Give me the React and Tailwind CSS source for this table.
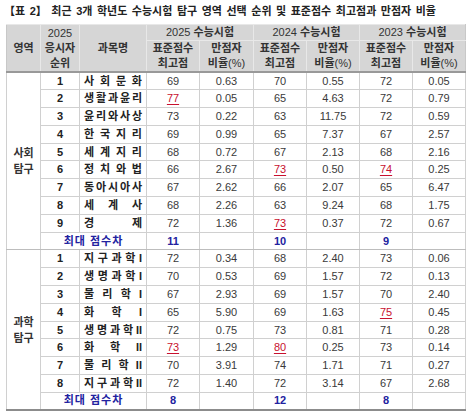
import React from "react";

const R = (v) => ({ v, red: true });

const social = [
  [1, "사 회 문 화", 69, "0.63", 70, "0.55", 72, "0.05"],
  [2, "생 활 과 윤 리", R(77), "0.05", 65, "4.63", 72, "0.79"],
  [3, "윤 리 와 사 상", 73, "0.22", 63, "11.75", 72, "0.59"],
  [4, "한 국 지 리", 69, "0.99", 65, "7.37", 67, "2.57"],
  [5, "세 계 지 리", 68, "0.72", 67, "2.13", 68, "2.16"],
  [6, "정 치 와 법", 66, "2.67", R(73), "0.50", R(74), "0.25"],
  [7, "동 아 시 아 사", 67, "2.62", 66, "2.07", 65, "6.47"],
  [8, "세 계 사", 68, "2.26", 63, "9.24", 68, "1.75"],
  [9, "경 제", 72, "1.36", R(73), "0.37", 72, "0.67"],
];

const science = [
  [1, "지 구 과 학 I", 72, "0.34", 68, "2.40", 73, "0.06"],
  [2, "생 명 과 학 I", 70, "0.53", 69, "1.57", 72, "0.13"],
  [3, "물 리 학 I", 67, "2.93", 69, "1.57", 70, "2.40"],
  [4, "화 학 I", 65, "5.90", 69, "1.63", R(75), "0.45"],
  [5, "생 명 과 학 II", 72, "0.75", 73, "0.81", 71, "0.28"],
  [6, "화 학 II", R(73), "1.29", R(80), "0.25", 73, "0.14"],
  [7, "물 리 학 II", 70, "3.91", 74, "1.71", 71, "0.27"],
  [8, "지 구 과 학 II", 72, "1.40", 72, "3.14", 67, "2.68"],
];

const td = "border border-[#d0d0d0] p-0 text-center align-middle";
const th = "border border-[#e8e8e8] bg-[#d6d6d6] p-0 text-center align-middle font-bold text-[#333]";

function Val({ x }) {
  if (x && typeof x === "object") {
    return (
      <span className="text-[#c8102e] underline decoration-[#c8102e] underline-offset-2">
        {x.v}
      </span>
    );
  }
  return <span>{x}</span>;
}

function Subject({ name }) {
  const parts = name.split(" ");
  return (
    <div className="flex justify-between px-[4px] font-bold text-[#222]">
      {parts.map((p, i) => (
        <span key={i}>{p}</span>
      ))}
    </div>
  );
}

function Group({ label, rows, max }) {
  return (
    <>
      {rows.map((r, i) => (
        <tr key={i} className="h-[17.8px]">
          {i === 0 && (
            <td rowSpan={rows.length + 1} className={`${td} font-bold text-[#333] leading-[16px] border-b-[#bdbdbd]`}>
              {label[0]}
              <br />
              {label[1]}
            </td>
          )}
          <td className={`${td} font-bold text-[#222]`}>{r[0]}</td>
          <td className={td}>
            <Subject name={r[1]} />
          </td>
          {r.slice(2).map((v, j) => (
            <td key={j} className={`${td} text-[#3a3a3a]`}>
              <Val x={v} />
            </td>
          ))}
        </tr>
      ))}
      <tr className="h-[17.8px]">
        <td colSpan={2} className={`${td} font-bold text-[#2222a0] tracking-[1px] border-b-[#bdbdbd]`}>
          최대 점수차
        </td>
        <td className={`${td} font-bold text-[#2222a0] border-b-[#bdbdbd]`}>{max[0]}</td>
        <td className={`${td} border-b-[#bdbdbd]`}></td>
        <td className={`${td} font-bold text-[#2222a0] border-b-[#bdbdbd]`}>{max[1]}</td>
        <td className={`${td} border-b-[#bdbdbd]`}></td>
        <td className={`${td} font-bold text-[#2222a0] border-b-[#bdbdbd]`}>{max[2]}</td>
        <td className={`${td} border-b-[#bdbdbd]`}></td>
      </tr>
    </>
  );
}

export default function App() {
  return (
    <div className="w-[474px] h-[415px] bg-white overflow-hidden font-['Liberation_Sans','Noto_Sans_CJK_KR',sans-serif] text-[11px] text-[#333]">
      <div className="h-[24px] pl-[4px] pt-[4px] leading-[14px] text-[11px] font-bold text-[#222] [word-spacing:1.5px] whitespace-nowrap">
        【표 2】 최근 3개 학년도 수능시험 탐구 영역 선택 순위 및 표준점수 최고점과 만점자 비율
      </div>
      <div className="pl-[6px]">
        <table className="border-collapse table-fixed w-[459px] border-t border-t-[#a8a8a8] border-b-2 border-b-[#8c8c8c] leading-[15px]">
          <colgroup>
            <col className="w-[34px]" />
            <col className="w-[39px]" />
            <col className="w-[67px]" />
            <col className="w-[53px]" />
            <col className="w-[54px]" />
            <col className="w-[53px]" />
            <col className="w-[53px]" />
            <col className="w-[53px]" />
            <col className="w-[53px]" />
          </colgroup>
          <thead>
            <tr className="h-[14px]">
              <th rowSpan={2} className={`${th} border-b-2 border-b-[#999] border-l-[#c8c8c8]`}>영역</th>
              <th rowSpan={2} className={`${th} border-b-2 border-b-[#999]`}>
                <span className="font-normal">2025</span>
                <br />
                응시자
                <br />
                순위
              </th>
              <th rowSpan={2} className={`${th} border-b-2 border-b-[#999]`}>과목명</th>
              <th colSpan={2} className={th}>
                <span className="font-normal">2025</span> 수능시험
              </th>
              <th colSpan={2} className={th}>
                <span className="font-normal">2024</span> 수능시험
              </th>
              <th colSpan={2} className={`${th} border-r-[#c8c8c8]`}>
                <span className="font-normal">2023</span> 수능시험
              </th>
            </tr>
            <tr className="h-[31px]">
              {[0, 1, 2].map((k) => (
                <React.Fragment key={k}>
                  <th className={`${th} border-b-2 border-b-[#999]`}>
                    표준점수
                    <br />
                    최고점
                  </th>
                  <th className={`${th} border-b-2 border-b-[#999] ${k === 2 ? "border-r-[#c8c8c8]" : ""}`}>
                    만점자
                    <br />
                    비율<span className="font-normal">(%)</span>
                  </th>
                </React.Fragment>
              ))}
            </tr>
          </thead>
          <tbody>
            <Group label={["사회", "탐구"]} rows={social} max={[11, 10, 9]} />
            <Group label={["과학", "탐구"]} rows={science} max={[8, 12, 8]} />
          </tbody>
        </table>
      </div>
    </div>
  );
}
